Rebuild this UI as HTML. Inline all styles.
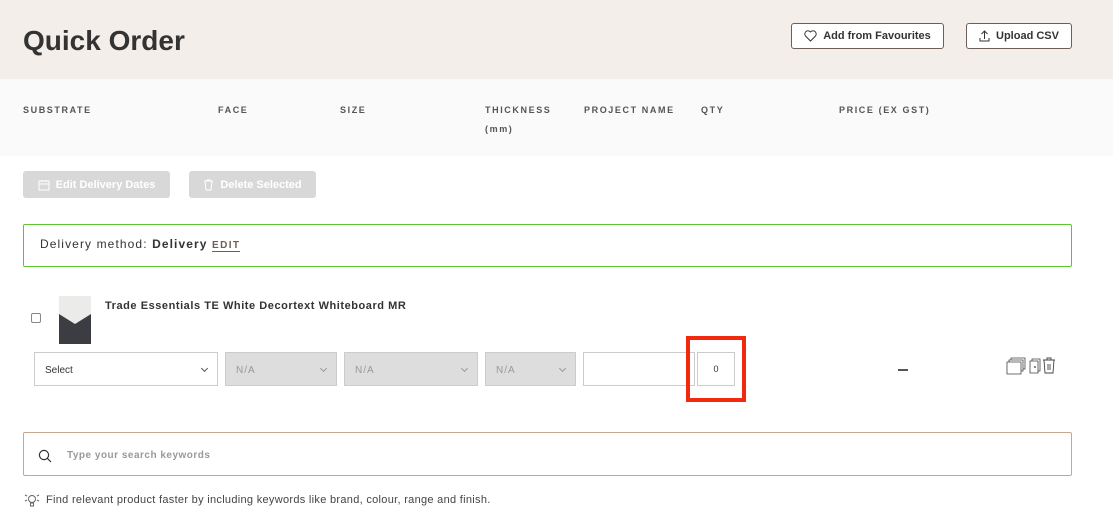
<!DOCTYPE html>
<html><head><meta charset="utf-8"><style>
*{box-sizing:border-box;margin:0;padding:0}
body{width:1113px;height:531px;background:#fff;font-family:"Liberation Sans",sans-serif;color:#333;position:relative;overflow:hidden}
.a{position:absolute}
.hdr{left:0;top:0;width:1113px;height:79px;background:#f3eee9}
.band{left:0;top:79px;width:1113px;height:77px;background:#fafafa}
h1{position:absolute;left:23px;top:25px;font-size:28px;font-weight:bold;color:#333}
.ob{position:absolute;height:26px;border:1px solid #6d5f57;border-radius:3px;background:#fff;font-size:11px;font-weight:bold;display:flex;align-items:center;justify-content:center;gap:6px;color:#333}
.col{position:absolute;top:101px;font-size:9px;font-weight:bold;letter-spacing:1.6px;color:#555;line-height:19px}
.gb{position:absolute;top:171px;height:27px;background:#d8d8d8;border-radius:3px;color:#fff;font-size:11px;font-weight:bold;display:flex;align-items:center;justify-content:center;gap:6px}
.sel{position:absolute;top:352px;height:34px;border:1px solid #ccc;font-size:10px;display:flex;align-items:center;padding-left:10px;padding-top:3px}
.na{background:#ddd;color:#999;letter-spacing:1px}
.chev{position:absolute;right:10px;top:13px;width:5px;height:5px;border-right:1px solid #555;border-bottom:1px solid #555;transform:rotate(45deg)}
.na .chev{border-color:#999}
</style></head><body>
<div class="a hdr"></div>
<div class="a band"></div>
<h1>Quick Order</h1>
<div class="ob" style="left:791px;top:23px;width:153px"><svg width="13" height="12" viewBox="0 0 13 12"><path d="M6.5 11 L1.5 6 A2.8 2.8 0 0 1 6.5 2 A2.8 2.8 0 0 1 11.5 6 Z" fill="none" stroke="#333" stroke-width="1"/></svg>Add from Favourites</div>
<div class="ob" style="left:966px;top:23px;width:106px"><svg width="11" height="12" viewBox="0 0 11 12"><path d="M5.5 9V1M2.5 4l3-3 3 3M1 8v3h9V8" fill="none" stroke="#333" stroke-width="1"/></svg>Upload CSV</div>
<div class="col" style="left:23px">SUBSTRATE</div>
<div class="col" style="left:218px">FACE</div>
<div class="col" style="left:340px">SIZE</div>
<div class="col" style="left:485px">THICKNESS<br>(mm)</div>
<div class="col" style="left:584px">PROJECT NAME</div>
<div class="col" style="left:701px">QTY</div>
<div class="col" style="left:839px">PRICE (EX GST)</div>
<div class="gb" style="left:23px;width:147px"><svg width="12" height="12" viewBox="0 0 12 12"><rect x="1" y="2" width="10" height="9" fill="none" stroke="#fff"/><path d="M1 5h10M4 1v2M8 1v2" stroke="#fff"/></svg>Edit Delivery Dates</div>
<div class="gb" style="left:189px;width:127px"><svg width="11" height="12" viewBox="0 0 11 12"><path d="M1 2h9M4 2V1h3v1M2 2l1 9h5l1-9" fill="none" stroke="#fff"/></svg>Delete Selected</div>
<div class="a" style="left:23px;top:224px;width:1049px;height:43px;border:1px solid #5cc530;border-radius:2px"></div>
<div class="a" style="left:40px;top:237px;font-size:12px;letter-spacing:1.1px;color:#333">Delivery method: <b>Delivery</b> <span style="font-size:10px;color:#6d5f57;letter-spacing:1.4px;border-bottom:1px solid #6d5f57;font-weight:bold">EDIT</span></div>
<div class="a" style="left:31px;top:313px;width:10px;height:10px;border:1px solid #888;border-radius:2px"></div>
<div class="a" style="left:59px;top:296px;width:32px;height:48px;background:#3b3d42;overflow:hidden"><svg class="a" style="left:0;top:0" width="32" height="48"><polygon points="0,0 32,0 32,18 16,28 0,18" fill="#ebebe9"/></svg></div>
<div class="a" style="left:105px;top:300px;font-size:11px;font-weight:bold;color:#333;letter-spacing:0.55px">Trade Essentials TE White Decortext Whiteboard MR</div>
<div class="sel" style="left:34px;width:184px">Select<span class="chev"></span></div>
<div class="sel na" style="left:225px;width:112px">N/A<span class="chev"></span></div>
<div class="sel na" style="left:344px;width:134px">N/A<span class="chev"></span></div>
<div class="sel na" style="left:485px;width:91px">N/A<span class="chev"></span></div>
<div class="sel" style="left:583px;width:112px"></div>
<div class="a" style="left:697px;top:352px;width:38px;height:34px;border:1px solid #ccc;font-size:9px;text-align:center;line-height:32px">0</div>
<div class="a" style="left:686px;top:336px;width:60px;height:66px;border:4px solid #f2280f"></div>
<div class="a" style="left:898px;top:369px;width:10px;height:2px;background:#555"></div>
<svg class="a" style="left:1005px;top:356px" width="58" height="20" viewBox="0 0 58 20"><path d="M2 6h14v12H2zM4 6V4h14v11h-2M6 4V2h14v11h-2" fill="none" stroke="#444" stroke-width="0.8"/><path d="M25 5h8v12h-8zM27 5V3h8v12h-2M29 11h2M30 10v2" fill="none" stroke="#444" stroke-width="0.8"/><path d="M38 4h12M42 4V2h4v2M39 4l1 13h8l1-13M43 8v6M45 8v6" fill="none" stroke="#444" stroke-width="0.9"/></svg>
<div class="a" style="left:23px;top:432px;width:1049px;height:44px;border:1px solid #c9a68c;border-radius:2px"></div>
<svg class="a" style="left:38px;top:449px" width="14" height="14" viewBox="0 0 14 14"><circle cx="6" cy="6" r="4.6" fill="none" stroke="#333" stroke-width="1.2"/><path d="M9.3 9.3L13 13" stroke="#333" stroke-width="1.2"/></svg>
<div class="a" style="left:67px;top:450px;font-size:10px;font-weight:bold;color:#999;letter-spacing:0.5px">Type your search keywords</div>
<svg class="a" style="left:24px;top:492px" width="16" height="16" viewBox="0 0 16 16"><circle cx="8" cy="7" r="3.5" fill="none" stroke="#666"/><path d="M6.5 11h3v3h-3zM1 3l2 1M15 3l-2 1M1 9l2-1M15 9l-2-1" stroke="#666" fill="none"/></svg>
<div class="a" style="left:46px;top:494px;font-size:11px;color:#444;letter-spacing:0.3px">Find relevant product faster by including keywords like brand, colour, range and finish.</div>
</body></html>
